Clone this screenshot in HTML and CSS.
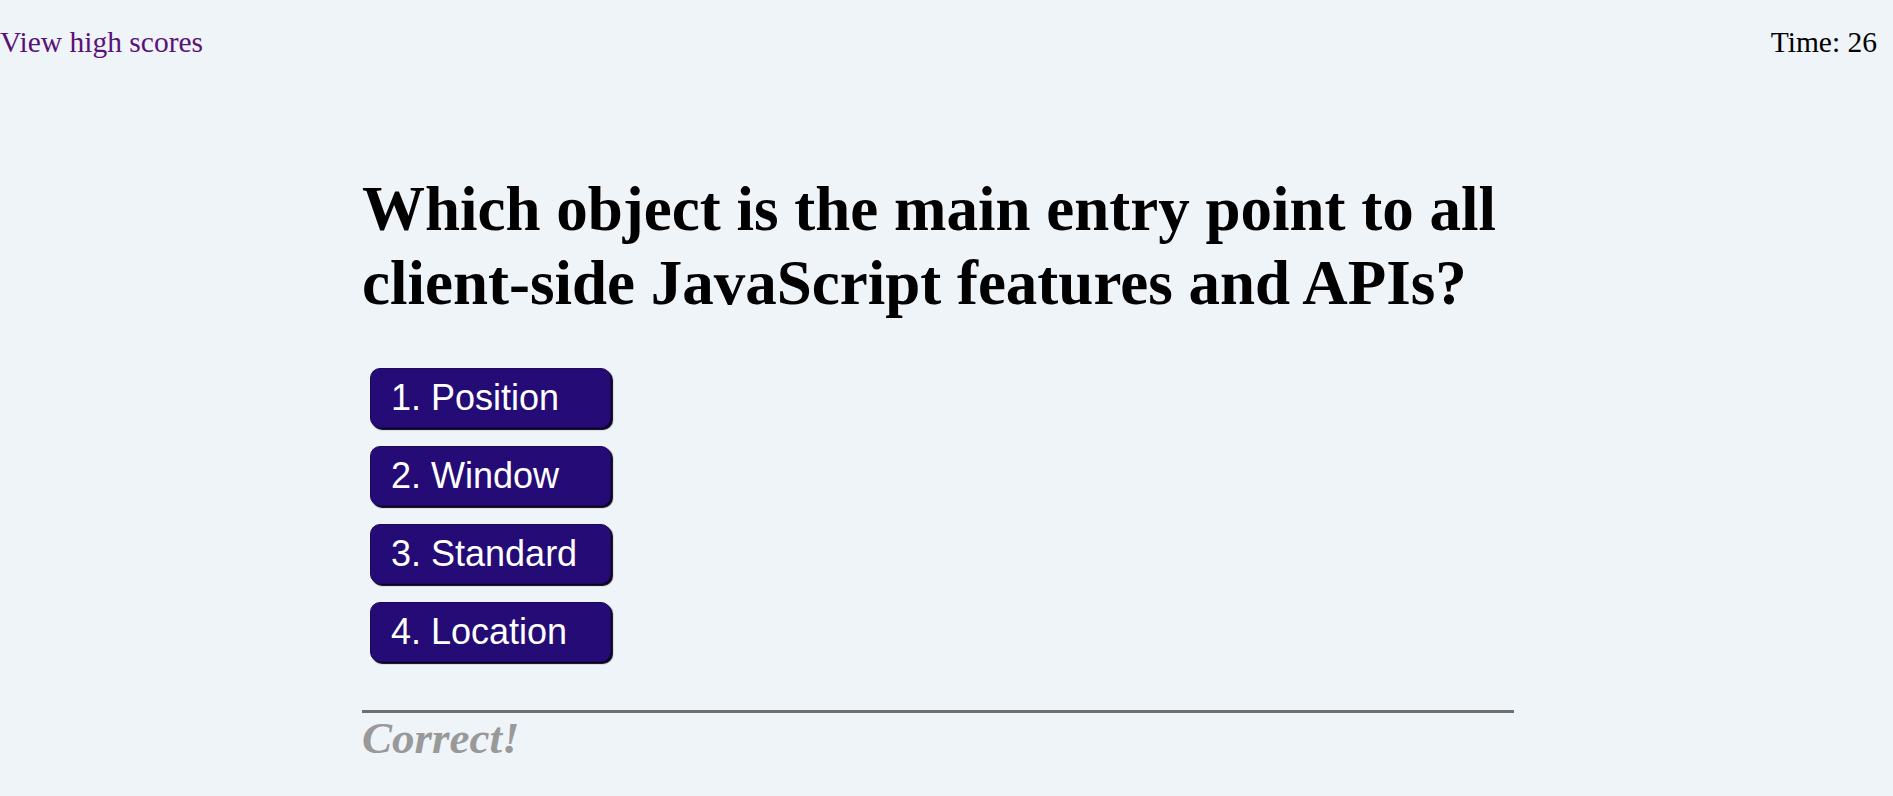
FILE: index.html
```html
<!DOCTYPE html>
<html lang="en">
<head>
<meta charset="utf-8">
<title>Code Quiz</title>
<link rel="stylesheet" href="styles.css">
</head>
<body>
<header class="top-bar">
  <a class="scores-link" href="#">View high scores</a>
  <span class="timer">Time: 26</span>
</header>
<main class="quiz">
  <h1 class="question">Which object is the main entry point to all client-side JavaScript features and APIs?</h1>
  <div class="choices">
    <button class="choice">1. Position</button>
    <button class="choice">2. Window</button>
    <button class="choice">3. Standard</button>
    <button class="choice">4. Location</button>
  </div>
  <hr class="divider">
  <p class="feedback">Correct!</p>
</main>
</body>
</html>
```
FILE: styles.css
```css
html, body {
  margin: 0;
  padding: 0;
}
body {
  background: #eff4f9;
  font-family: "Liberation Serif", "Times New Roman", serif;
  color: #000;
}
.top-bar {
  display: flex;
  justify-content: space-between;
  align-items: baseline;
  padding: 26px 16px 0 0;
  font-size: 29.5px;
  line-height: 33px;
}
.scores-link {
  color: #5b1278;
  text-decoration: none;
}
.timer {
  color: #000;
}
.quiz {
  margin-left: 362px;
  width: 1152px;
}
.question {
  margin: 113px 0 0 0;
  font-size: 63px;
  line-height: 74px;
  font-weight: bold;
}
.choices {
  display: flex;
  flex-direction: column;
  align-items: flex-start;
  gap: 18px;
  margin: 48px 0 0 8px;
}
.choice {
  box-sizing: border-box;
  width: 241px;
  height: 60px;
  padding: 0 20px;
  text-align: left;
  font-family: "Liberation Sans", Arial, sans-serif;
  font-size: 36px;
  color: #fff;
  background: #250b75;
  border: 1px solid #1c085c;
  border-radius: 10px;
  box-shadow: 2px 2px 1px #08021c;
  cursor: pointer;
}
.divider {
  margin: 48px 0 0 0;
  height: 3px;
  border: 0;
  background: #707070;
}
.feedback {
  margin: -1px 0 0 0;
  font-size: 45px;
  font-weight: bold;
  font-style: italic;
  color: #999999;
}
```
